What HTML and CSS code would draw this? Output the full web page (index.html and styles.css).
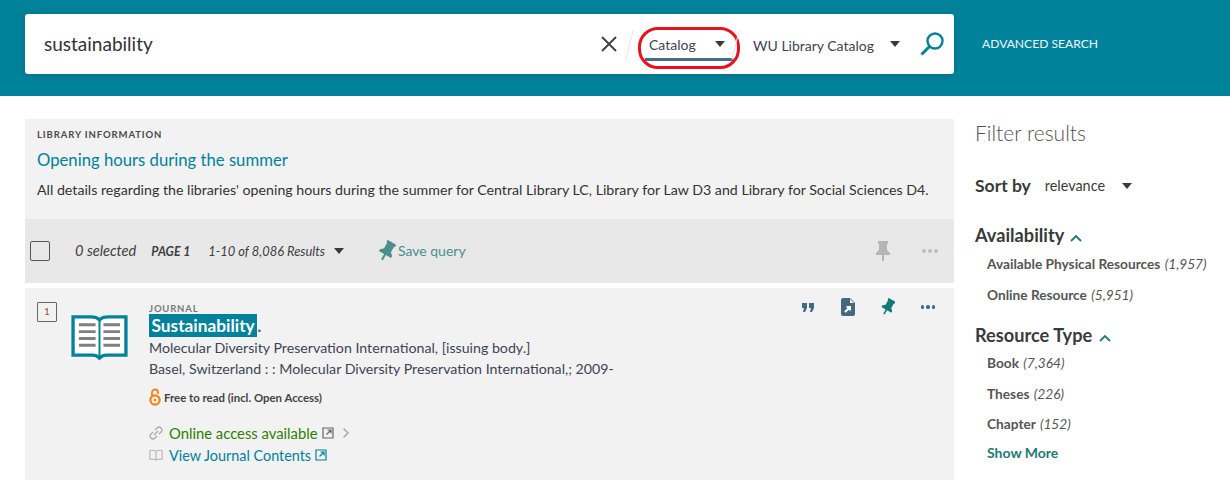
FILE: index.html
```html
<!DOCTYPE html>
<html lang="en">
<head>
<meta charset="UTF-8" />
<title>Search results</title>
<link rel="stylesheet" href="styles.css">
</head>
<body>
  <header class="top-bar">
    <div class="search-box">
      <span class="search-term">sustainability</span>
      <svg class="clear-icon" width="16" height="16" viewBox="0 0 16 16"><path d="M1 1l14 14M15 1L1 15" stroke="#444" stroke-width="2" fill="none"/></svg>
      <span class="slash"></span>
      <div class="scope scope-active">
        <span class="scope-label">Catalog</span>
        <span class="caret"></span>
        <span class="red-ring"></span>
      </div>
      <span class="slash slash-second"></span>
      <div class="scope scope-library">
        <span class="scope-label">WU Library Catalog</span>
        <span class="caret"></span>
      </div>
      <svg class="search-icon" width="26" height="26" viewBox="0 0 26 26"><circle cx="16" cy="10" r="7.5" stroke="#00829b" stroke-width="2.4" fill="none"/><path d="M10.5 15.5L2.5 23.5" stroke="#00829b" stroke-width="3" fill="none"/></svg>
    </div>
    <a class="advanced-link">ADVANCED SEARCH</a>
  </header>

  <div class="page">
    <main class="results">
      <section class="notice">
        <div class="notice-tag">LIBRARY INFORMATION</div>
        <a class="notice-title">Opening hours during the summer</a>
        <p class="notice-text">All details regarding the libraries' opening hours during the summer for Central Library LC, Library for Law D3 and Library for Social Sciences D4.</p>
      </section>

      <section class="toolbar">
        <span class="checkbox"></span>
        <span class="selected-count">0 selected</span>
        <span class="page-num">PAGE 1</span>
        <span class="result-range">1-10 of 8,086 Results</span>
        <span class="caret"></span>
        <svg class="pin-save" width="18" height="22" viewBox="0 0 16 22"><path transform="rotate(30 8 11)" d="M3 1h10v2l-1 1v6l3 3v2H9v6H7v-6H1v-2l3-3V4L3 3z" fill="#4b8f8c"/></svg>
        <span class="save-query">Save query</span>
        <span class="toolbar-right">
          <svg width="16" height="22" viewBox="0 0 16 22"><path d="M3 1h10v2l-1 1v6l3 3v2H9v6H7v-6H1v-2l3-3V4L3 3z" fill="#b5b5b5"/></svg>
          <span class="dots dots-muted"><i></i><i></i><i></i></span>
        </span>
      </section>

      <article class="record">
        <span class="record-num">1</span>
        <svg class="book-icon" width="57" height="47" viewBox="0 0 58 48">
          <path d="M2 3h18c4 0 7 1 9 3 2-2 5-3 9-3h18v39H36c-3 0-5 1-7 3-2-2-4-3-7-3H2z" fill="#fff" stroke="#00829b" stroke-width="3.4"/>
          <path d="M29 6v38" stroke="#00829b" stroke-width="2"/>
          <path d="M8 11h17M8 18h17M8 25h17M8 32h17M33 11h17M33 18h17M33 25h17M33 32h17" stroke="#808080" stroke-width="3"/>
        </svg>
        <div class="record-body">
          <div class="record-type">JOURNAL</div>
          <h2 class="record-title"><mark>Sustainability</mark>.</h2>
          <div class="record-line">Molecular Diversity Preservation International, [issuing body.]</div>
          <div class="record-line">Basel, Switzerland : : Molecular Diversity Preservation International,; 2009-</div>
          <div class="open-access">
            <svg width="12" height="18" viewBox="0 0 12 18"><path d="M3 8V4.500a3 3 0 0 1 6 0V6" stroke="#f68212" stroke-width="1.800" fill="none"/><circle cx="6" cy="12" r="4.600" stroke="#f68212" stroke-width="2.200" fill="none"/><circle cx="6" cy="12" r="1.300" fill="#f68212"/></svg>
            <span>Free to read (incl. Open Access)</span>
          </div>
          <div class="access-row">
            <svg class="row-icon" width="14" height="14" viewBox="0 0 14 14"><path d="M6 4l2-2a2.600 2.600 0 0 1 4 4l-2 2M8 10l-2 2a2.600 2.600 0 0 1-4-4l2-2M5 9l4-4" stroke="#aaa" stroke-width="1.300" fill="none"/></svg>
            <span class="online-link">Online access available</span>
            <svg class="ext-icon" width="12" height="12" viewBox="0 0 12 12"><path d="M1 1h10v10H1zM4.500 7.500L9 3M5.500 3H9v3.500" stroke="#666" stroke-width="1.200" fill="none"/></svg>
            <svg class="chevron" width="8" height="12" viewBox="0 0 8 12"><path d="M1.500 1.500L6 6l-4.500 4.500" stroke="#9db0bd" stroke-width="1.600" fill="none"/></svg>
          </div>
          <div class="access-row">
            <svg class="row-icon row-book" width="16" height="14" viewBox="0 0 16 14"><path d="M8 3C6.500 1.500 4 1.500 1 2v10c3-.5 5.500-.5 7 1 1.500-1.500 4-1.500 7-1V2C12 1.500 9.500 1.500 8 3zM8 3v10" stroke="#aaa" stroke-width="1.100" fill="none"/></svg>
            <span class="contents-link">View Journal Contents</span>
            <svg class="ext-icon" width="12" height="12" viewBox="0 0 12 12"><path d="M1 1h10v10H1zM4.500 7.500L9 3M5.500 3H9v3.500" stroke="#00829b" stroke-width="1.200" fill="none"/></svg>
          </div>
        </div>
        <div class="record-actions">
          <svg width="14" height="10" viewBox="0 0 14 10"><path d="M1 1h5v5L4 10H2l1-4H1zM8 1h5v5l-2 4H9l1-4H8z" fill="#44687f"/></svg>
          <svg width="14" height="18" viewBox="0 0 14 18"><path d="M2 0h7l5 5v11a2 2 0 0 1-2 2H2a2 2 0 0 1-2-2V2a2 2 0 0 1 2-2z" fill="#44687f"/><path d="M9 1v4h4z" fill="#f2f2f2"/><path d="M4 14l4-4M5.500 9H9v3.500" stroke="#fff" stroke-width="2" fill="none"/></svg>
          <svg class="pin-record" width="14" height="18" viewBox="0 0 16 22"><path transform="rotate(30 8 11)" d="M3 1h10v2l-1 1v6l3 3v2H9v6H7v-6H1v-2l3-3V4L3 3z" fill="#0f7a78"/></svg>
          <span class="dots"><i></i><i></i><i></i></span>
        </div>
      </article>
    </main>

    <aside class="filters">
      <div class="filters-title">Filter results</div>
      <div class="sort-row">
        <span class="sort-label">Sort by</span>
        <span class="sort-value">relevance</span>
        <span class="caret"></span>
      </div>
      <div class="facet-head">Availability <svg width="12" height="8" viewBox="0 0 12 8"><path d="M1 7l5-5 5 5" stroke="#1f7a76" stroke-width="1.800" fill="none"/></svg></div>
      <div class="facet facet-strong">Available Physical Resources <em>(1,957)</em></div>
      <div class="facet facet-strong">Online Resource <em>(5,951)</em></div>
      <div class="facet-head facet-head-second">Resource Type <svg width="12" height="8" viewBox="0 0 12 8"><path d="M1 7l5-5 5 5" stroke="#1f7a76" stroke-width="1.800" fill="none"/></svg></div>
      <div class="facet">Book <em>(7,364)</em></div>
      <div class="facet">Theses <em>(226)</em></div>
      <div class="facet">Chapter <em>(152)</em></div>
      <a class="show-more">Show More</a>
    </aside>
  </div>
</body>
</html>
```

FILE: styles.css
```css
html, body {
  margin: 0;
  padding: 0;
  height: 480px;
  overflow: hidden;
  background: #fff;
  color: #3a3a3a;
  font-family: Lato, 'Noto Sans', sans-serif;
  font-size: 14px;
}
.top-bar {
  height: 96px;
  padding: 14px 0 0 25px;
  box-sizing: border-box;
  background: #00829b;
  display: flex;
  align-items: flex-start;
}
.search-box {
  width: 929px;
  height: 60px;
  background: #fff;
  border-radius: 3px;
  box-shadow: 0 1px 8px rgba(0, 0, 0, 0.15);
  display: flex;
  align-items: center;
  box-sizing: border-box;
  padding: 0 9px 0 19px;
}
.search-term {
  flex: 1;
  font-size: 19px;
  color: #333;
  margin-bottom: 2px;
}
.clear-icon {
  margin: 0 12px 0 0;
}
.slash {
  width: 1px;
  height: 30px;
  background: #e4e4e4;
  transform: rotate(14deg);
  margin: 2px 15px 0 0;
}
.slash-second {
  margin: 2px 17px 0 2px;
}
.scope {
  display: flex;
  align-items: center;
  position: relative;
  font-size: 14px;
  color: #3d4454;
}
.scope-active {
  width: 88px;
  height: 36px;
  margin-bottom: 2px;
  padding: 5px 0 0 4px;
  box-sizing: border-box;
  border-bottom: 3px solid #4a6a85;
}
.scope-active .scope-label {
  flex: 1;
}
.scope-active .caret {
  margin-right: 8px;
}
.scope-library {
  width: 147px;
  margin-top: 3px;
}
.scope-library .scope-label {
  flex: 1;
}
.scope-library .caret {
  margin-top: -3px;
}
.red-ring {
  position: absolute;
  left: -7px;
  top: 2px;
  width: 96px;
  height: 36px;
  border: 3px solid #e8121f;
  border-radius: 20px;
}
.caret {
  display: inline-block;
  width: 0;
  height: 0;
  border-left: 5.500px solid transparent;
  border-right: 5.500px solid transparent;
  border-top: 6px solid #3a3a3a;
}
.search-icon {
  margin-left: 19px;
}
.advanced-link {
  margin: 22px 0 0 28px;
  font-size: 12.100px;
  color: #f0f8fa;
}
.page {
  display: flex;
  padding: 23px 0 0 25px;
}
.results {
  width: 929px;
}
.notice {
  height: 100px;
  background: #f2f2f2;
  padding: 10px 12px 0;
  box-sizing: border-box;
}
.notice-tag {
  font-size: 9.500px;
  font-weight: 700;
  letter-spacing: 0.900px;
  color: #4a4a4a;
}
.notice-title {
  display: block;
  margin-top: 10px;
  font-size: 16.700px;
  color: #00829b;
}
.notice-text {
  margin: 11px 0 0;
  font-size: 14.200px;
  color: #333;
}
.toolbar {
  height: 64px;
  background: #e8e8e8;
  display: flex;
  align-items: center;
  padding: 0 16px 0 5px;
  box-sizing: border-box;
  color: #3f3f3f;
}
.checkbox {
  width: 18px;
  height: 18px;
  border: 1px solid #555;
  border-radius: 2px;
  margin-right: 25px;
}
.selected-count {
  font-style: italic;
  font-size: 14.600px;
  margin: -2px 15px 0 0;
}
.page-num {
  font-style: italic;
  font-weight: 700;
  font-size: 12.300px;
  margin-right: 18px;
}
.result-range {
  font-style: italic;
  font-size: 12.900px;
  margin-right: 9px;
}
.pin-save {
  margin-left: 34px;
  margin-right: 2px;
}
.save-query {
  font-size: 14px;
  color: #4b8f8c;
  margin-bottom: 2px;
}
.toolbar-right {
  margin-left: auto;
  display: flex;
  align-items: center;
  gap: 31px;
}
.dots {
  display: inline-flex;
  gap: 2px;
}
.dots i {
  width: 3.500px;
  height: 3.500px;
  border-radius: 50%;
  background: #44687f;
}
.dots-muted i {
  width: 4px;
  height: 4px;
  background: #bdbdbd;
}
.record {
  margin-top: 5px;
  height: 200px;
  background: #f2f2f2;
  display: flex;
  position: relative;
}
.record-num {
  width: 18px;
  height: 18px;
  margin: 14px 0 0 12px;
  border: 1px solid #666;
  border-radius: 1px;
  font-size: 10px;
  text-align: center;
  line-height: 17px;
  color: #8a5a3a;
  flex: none;
}
.book-icon {
  margin: 26px 0 0 14px;
  flex: none;
}
.record-body {
  margin: 15px 0 0 21px;
  flex: 1;
}
.record-type {
  font-size: 9.500px;
  font-weight: 700;
  letter-spacing: 0.800px;
  color: #7a7a7a;
}
.record-title {
  margin: 0;
  font-size: 17.300px;
  font-weight: 700;
  line-height: 23px;
  color: #44687f;
}
.record-title mark {
  display: inline-block;
  background: #00829b;
  color: #fff;
  padding: 0 2.500px;
}
.record-line {
  font-size: 14.200px;
  line-height: 21px;
  color: #3d4454;
}
.open-access {
  margin-top: 9px;
  display: flex;
  align-items: center;
  gap: 3px;
  font-size: 11.400px;
  font-weight: 700;
  color: #444;
}
.access-row {
  display: flex;
  align-items: center;
  height: 22px;
  font-size: 14.800px;
}
.open-access + .access-row {
  margin-top: 16px;
}
.row-icon {
  width: 14px;
  margin-right: 6px;
}
.online-link {
  color: #2e8000;
  margin-right: 4px;
}
.contents-link {
  color: #00829b;
  margin-right: 4px;
  font-size: 14.400px;
}
.chevron {
  margin-left: 8px;
}
.record-actions {
  position: absolute;
  top: 10px;
  right: 19px;
  display: flex;
  align-items: center;
  gap: 26px;
}
.filters {
  margin-left: 21px;
  width: 255px;
}
.filters-title {
  font-size: 21px;
  font-weight: 300;
  color: #555;
  margin-top: 1px;
}
.sort-row {
  margin-top: 30px;
  display: flex;
  align-items: center;
  font-size: 14.400px;
}
.sort-label {
  font-size: 17.500px;
  font-weight: 700;
  margin-right: 14px;
}
.sort-value {
  margin-right: 17px;
}
.facet-head {
  margin-top: 28px;
  font-size: 18.200px;
  font-weight: 700;
  line-height: 22px;
}
.facet-head svg {
  margin-left: 2px;
}
.facet-head-second {
  margin-top: 19px;
}
.facet {
  margin: 10.500px 0 0 12px;
  font-size: 13.700px;
  line-height: 20px;
  font-weight: 700;
  color: #555;
}
.facet-head + .facet {
  margin-top: 8px;
}
.facet-head-second + .facet {
  margin-top: 7px;
}
.facet-strong + .facet-strong {
  margin-top: 11px;
}
.facet em {
  font-weight: 400;
  margin-left: 1px;
}
.show-more {
  display: block;
  margin: 9.500px 0 0 12px;
  font-size: 14px;
  font-weight: 700;
  color: #1f7a76;
}
```
